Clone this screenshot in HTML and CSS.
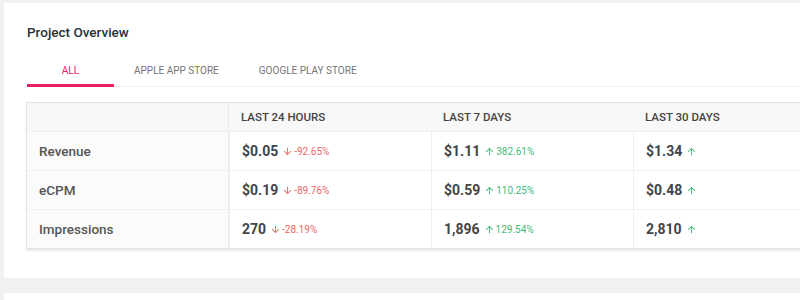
FILE: index.html
```html
<!DOCTYPE html>
<html lang="en">

<head>
    <meta charset="UTF-8">
    <meta name="viewport" content="width=device-width, initial-scale=1.0">
    <title>Project Overview</title>
    <link rel="stylesheet" href="styles.css">
</head>

<body>
    <main class="page">
        <section class="card">
            <h2 class="card-title">Project Overview</h2>

            <!-- Store tabs -->
            <nav class="tabs">
                <div class="tab active">All</div>
                <div class="tab">Apple App Store</div>
                <div class="tab">Google Play Store</div>
            </nav>

            <!-- Stats table -->
            <div class="stats">
                <div class="stats-row stats-head">
                    <div class="cell label"></div>
                    <div class="cell">Last 24 hours</div>
                    <div class="cell">Last 7 days</div>
                    <div class="cell">Last 30 days</div>
                </div>

                <div class="stats-row">
                    <div class="cell label">Revenue</div>
                    <div class="cell">
                        <span class="value">$0.05</span>
                        <span class="change down">
                            <svg viewBox="0 0 24 24"><path d="M20 12l-1.41-1.41L13 16.17V4h-2v12.17l-5.58-5.59L4 12l8 8 8-8z"/></svg>-92.65%
                        </span>
                    </div>
                    <div class="cell">
                        <span class="value">$1.11</span>
                        <span class="change up">
                            <svg viewBox="0 0 24 24"><path d="M4 12l1.41 1.41L11 7.83V20h2V7.83l5.58 5.59L20 12l-8-8-8 8z"/></svg>382.61%
                        </span>
                    </div>
                    <div class="cell">
                        <span class="value">$1.34</span>
                        <span class="change up">
                            <svg viewBox="0 0 24 24"><path d="M4 12l1.41 1.41L11 7.83V20h2V7.83l5.58 5.59L20 12l-8-8-8 8z"/></svg>
                        </span>
                    </div>
                </div>

                <div class="stats-row">
                    <div class="cell label">eCPM</div>
                    <div class="cell">
                        <span class="value">$0.19</span>
                        <span class="change down">
                            <svg viewBox="0 0 24 24"><path d="M20 12l-1.41-1.41L13 16.17V4h-2v12.17l-5.58-5.59L4 12l8 8 8-8z"/></svg>-89.76%
                        </span>
                    </div>
                    <div class="cell">
                        <span class="value">$0.59</span>
                        <span class="change up">
                            <svg viewBox="0 0 24 24"><path d="M4 12l1.41 1.41L11 7.83V20h2V7.83l5.58 5.59L20 12l-8-8-8 8z"/></svg>110.25%
                        </span>
                    </div>
                    <div class="cell">
                        <span class="value">$0.48</span>
                        <span class="change up">
                            <svg viewBox="0 0 24 24"><path d="M4 12l1.41 1.41L11 7.83V20h2V7.83l5.58 5.59L20 12l-8-8-8 8z"/></svg>
                        </span>
                    </div>
                </div>

                <div class="stats-row">
                    <div class="cell label">Impressions</div>
                    <div class="cell">
                        <span class="value">270</span>
                        <span class="change down">
                            <svg viewBox="0 0 24 24"><path d="M20 12l-1.41-1.41L13 16.17V4h-2v12.17l-5.58-5.59L4 12l8 8 8-8z"/></svg>-28.19%
                        </span>
                    </div>
                    <div class="cell">
                        <span class="value">1,896</span>
                        <span class="change up">
                            <svg viewBox="0 0 24 24"><path d="M4 12l1.41 1.41L11 7.83V20h2V7.83l5.58 5.59L20 12l-8-8-8 8z"/></svg>129.54%
                        </span>
                    </div>
                    <div class="cell">
                        <span class="value">2,810</span>
                        <span class="change up">
                            <svg viewBox="0 0 24 24"><path d="M4 12l1.41 1.41L11 7.83V20h2V7.83l5.58 5.59L20 12l-8-8-8 8z"/></svg>
                        </span>
                    </div>
                </div>
            </div>
        </section>

        <!-- Next card, only its top shows -->
        <section class="card next"></section>
    </main>
</body>

</html>
```

FILE: styles.css
```css
html,
body {
    overflow: hidden;
}

body {
    font-family: Roboto, "Liberation Sans", Arial, sans-serif;
    margin: 0;
    padding: 0;
    background-color: #f1f1f1;
    color: #444;
}

.page {
    display: flex;
    flex-direction: column;
    gap: 15px;
    padding: 3px 0 0 4px;
}

.card {
    background-color: #fff;
    padding: 19px 0 28px 23px;
    overflow: hidden;
}

.card.next {
    height: 40px;
    padding: 0;
}

.card-title {
    margin: 0;
    font-size: 13.5px;
    font-weight: 500;
    line-height: 20px;
    color: #263238;
}

/* Tabs */
.tabs {
    display: flex;
    margin-top: 13px;
    border-bottom: 1px solid #f0f0f0;
}

.tab {
    min-width: 87px;
    box-sizing: border-box;
    padding: 10px 20px 0;
    height: 32px;
    text-align: center;
    font-size: 10px;
    text-transform: uppercase;
    color: #757575;
    border-bottom: 2px solid transparent;
    margin-bottom: -1px;
}

.tab.active {
    color: #e91e63;
    border-bottom: 3px solid #e91e63;
    padding-left: 0;
    padding-right: 0;
}

/* Stats table */
.stats {
    display: flex;
    flex-direction: column;
    width: 808px;
    margin-top: 15px;
    margin-left: -1px;
    border: 1px solid #e3e3e3;
    border-bottom: 2px solid #e6e6e6;
    box-shadow: 0 1px 2px rgba(0, 0, 0, 0.06);
}

.stats-row {
    display: grid;
    grid-template-columns: repeat(4, 202px);
    height: 38px;
    border-top: 1px solid #f0f0f0;
}

.stats-row.stats-head {
    height: 28px;
    border-top: none;
    background-color: #f8f8f8;
    font-size: 11.5px;
    font-weight: 500;
    text-transform: uppercase;
    color: #444;
}

.cell {
    display: flex;
    align-items: center;
    gap: 4px;
    padding-left: 12px;
    border-left: 1px solid #f0f0f0;
}

.cell:first-child {
    border-left: none;
}

.cell.label {
    background-color: #fbfbfb;
    font-size: 13.5px;
    font-weight: 500;
    color: #555;
    border-right: 1px solid #ececec;
}

.stats-head .cell.label {
    background-color: transparent;
}

.stats-head .cell {
    border-left: none;
}

.value {
    font-size: 14px;
    font-weight: 700;
    color: #444;
}

.change {
    display: flex;
    align-items: center;
    gap: 1px;
    font-size: 10px;
}

.change svg {
    width: 11px;
    height: 11px;
    fill: currentColor;
}

.change.down {
    color: #ea6a68;
}

.change.up {
    color: #45b97a;
}
```
